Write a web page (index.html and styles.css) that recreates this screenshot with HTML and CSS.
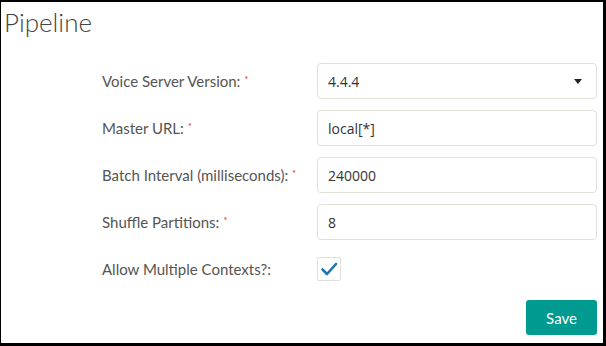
FILE: index.html
```html
<!DOCTYPE html>
<html lang="en">
<head>
  <meta charset="UTF-8">
  <meta name="viewport" content="width=device-width, initial-scale=1.0">
  <title>Pipeline</title>
  <link rel="stylesheet" href="styles.css">
</head>
<body>

  <h1 class="page-title">Pipeline</h1>

  <form class="pipeline-form">
    <div class="form-row">
      <label class="form-label">Voice Server Version: <span class="req">*</span></label>
      <div class="select-box">
        <span>4.4.4</span>
        <span class="caret"></span>
      </div>
    </div>
    <div class="form-row">
      <label class="form-label">Master URL: <span class="req">*</span></label>
      <input type="text" class="text-input" value="local[*]">
    </div>
    <div class="form-row">
      <label class="form-label">Batch Interval (milliseconds): <span class="req">*</span></label>
      <input type="text" class="text-input" value="240000">
    </div>
    <div class="form-row">
      <label class="form-label">Shuffle Partitions: <span class="req">*</span></label>
      <input type="text" class="text-input" value="8">
    </div>
    <div class="form-row">
      <label class="form-label">Allow Multiple Contexts?:</label>
      <div class="check-box">
        <svg width="18" height="18" viewBox="0 0 18 18">
          <path d="M2.5 9.5 L7 14 L16 4" fill="none" stroke="#1b75b3" stroke-width="2.6" stroke-linecap="round" stroke-linejoin="round"/>
        </svg>
      </div>
    </div>
    <div class="form-actions">
      <button type="button" class="save-btn">Save</button>
    </div>
  </form>

</body>
</html>
```

FILE: styles.css
```css
html {
  margin: 0;
  padding: 0;
}

body {
  margin: 0;
  width: 606px;
  height: 346px;
  box-sizing: border-box;
  border-style: solid;
  border-color: #000;
  border-width: 2px 3px 3px 1px;
  background-color: #fff;
  font-family: Lato, "Open Sans", sans-serif;
  overflow: hidden;
}

.page-title {
  margin: 0;
  padding: 5px 0 0 3px;
  font-size: 26px;
  line-height: 30px;
  font-weight: 300;
  color: #444;
}

.pipeline-form {
  margin-top: 26px;
  padding-left: 101px;
  display: flex;
  flex-direction: column;
  gap: 11px;
}

.form-row {
  display: flex;
  align-items: center;
  height: 36px;
}

.form-label {
  width: 215px;
  font-size: 15px;
  color: #555;
}

.req {
  color: #e53935;
  font-size: 10px;
  vertical-align: 4px;
}

.text-input,
.select-box {
  box-sizing: border-box;
  width: 280px;
  height: 36px;
  border: 1px solid #e2dfda;
  border-radius: 4px;
  padding: 0 10px;
  font-family: "Open Sans", sans-serif;
  font-size: 14px;
  color: #333;
  background: #fff;
  outline: none;
}

.select-box {
  display: flex;
  align-items: center;
  justify-content: space-between;
  padding-right: 14px;
}

.caret {
  width: 0;
  height: 0;
  border-left: 4px solid transparent;
  border-right: 4px solid transparent;
  border-top: 5px solid #222;
}

.check-box {
  box-sizing: border-box;
  width: 24px;
  height: 24px;
  border: 1px solid #e2dfda;
  border-radius: 2px;
  display: flex;
  align-items: center;
  justify-content: center;
}

.form-actions {
  display: flex;
  justify-content: flex-end;
  width: 495px;
  margin-top: 2px;
}

.save-btn {
  width: 71px;
  height: 35px;
  background-color: #009a90;
  color: #fff;
  border: none;
  border-radius: 3px;
  font-family: Lato, sans-serif;
  font-size: 15px;
  cursor: pointer;
}
```
